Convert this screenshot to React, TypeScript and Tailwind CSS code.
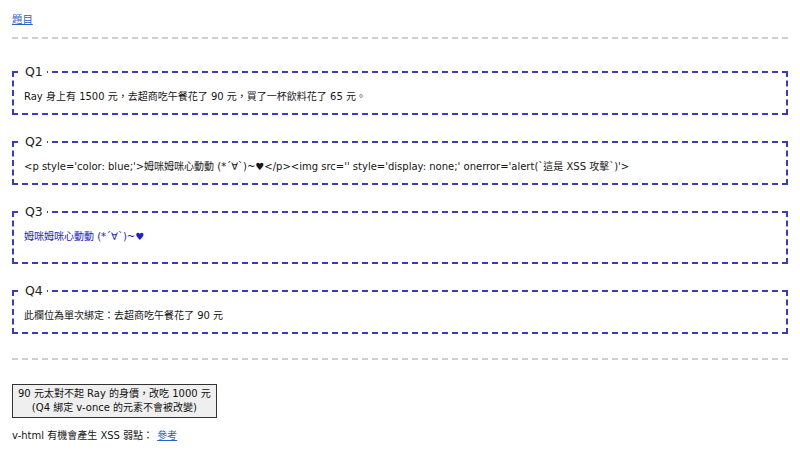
import React from "react";

const font = { fontFamily: '"DejaVu Sans", "Noto Sans CJK TC", sans-serif' };

function Box({ label, children, extra }: { label: string; children: React.ReactNode; extra?: string }) {
  return (
    <fieldset className={"border-2 border-dashed border-[#3a3ac4] pl-[10px] pr-[10px] pt-[12px] pb-[10px] " + (extra ?? "")}>
      <legend className="ml-[-3px] px-[4px] text-[12.5px] leading-[14px] text-[#222]">{label}</legend>
      {children}
    </fieldset>
  );
}

export default function App() {
  return (
    <div className="w-[800px] h-[450px] bg-white px-3 pt-[12px] text-[#151515]" style={font}>
      <a href="#" className="text-[10.4px] leading-[14px] text-[#2a62c8] underline block w-fit">題目</a>
      <div className="mt-[11px] border-t-2 border-dashed border-[#cfcfcf]" />
      <div className="mt-[26px] flex flex-col gap-[20px]">
        <Box label="Q1">
          <p className="text-[10px] leading-[12px]">Ray 身上有 1500 元，去超商吃午餐花了 90 元，買了一杯飲料花了 65 元。</p>
        </Box>
        <Box label="Q2">
          <p className="text-[10px] leading-[12px]">{"<p style='color: blue;'>姆咪姆咪心動動 (*´∀`)~♥</p><img src='' style='display: none;' onerror='alert(`這是 XSS 攻擊`)'>"}</p>
        </Box>
        <Box label="Q3" extra="pb-[19px]">
          <p className="text-[10px] leading-[12px] text-[#2020c8]">姆咪姆咪心動動 (*´∀`)~♥</p>
        </Box>
        <Box label="Q4">
          <p className="text-[10px] leading-[12px]">此欄位為單次綁定：去超商吃午餐花了 90 元</p>
        </Box>
      </div>
      <div className="mt-[24px] border-t-2 border-dashed border-[#cfcfcf]" />
      <button className="mt-[24px] block h-[34px] px-[5px] whitespace-nowrap border border-[#333] bg-[#efefef] text-[10px] leading-[14px] text-[#111] text-center" style={font}>
        90 元太對不起 Ray 的身價，改吃 1000 元
        <br />
        (Q4 綁定 v-once 的元素不會被改變)
      </button>
      <p className="mt-[11px] text-[10px] leading-[14px]">
        v-html 有機會產生 XSS 弱點：
        <a href="#" className="ml-[4px] text-[#2a62c8] underline">參考</a>
      </p>
    </div>
  );
}
